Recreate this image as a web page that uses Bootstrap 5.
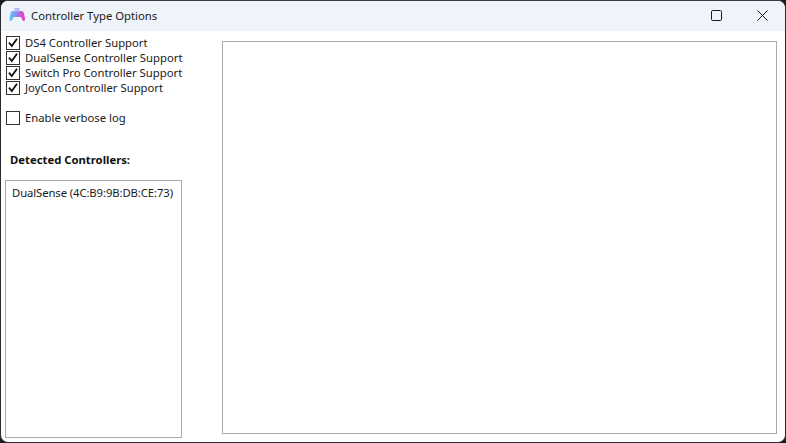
<!DOCTYPE html>
<html lang="en">
<head>
<meta charset="utf-8">
<title>Controller Type Options</title>
<link href="https://cdn.jsdelivr.net/npm/bootstrap@5.3.0/dist/css/bootstrap.min.css" rel="stylesheet">
<style>
html,body{height:100%;margin:0;background:#1c1c1c;overflow:hidden}
body{font-family:"Noto Sans","Open Sans",sans-serif;font-size:11.3px;line-height:15px;color:#1a1a1a}
.app-window{height:443px;width:786px;background:#fff;border:1px solid #2b2b2b;border-top-color:#3a3a3a;border-radius:8px;overflow:hidden}
.title-bar{height:30px;background:#eff3fa;padding:0 0 2px 7px}
.title-text{margin-left:5px;font-size:11.3px}
.win-btn{width:46px;height:28px}
.win-body{height:411px}
.side-col{width:221px;padding:4px 0 4px 4px}
.check-row{height:15px;padding-left:1px;margin:0}
.check-row .form-check-input{width:14px;height:14px;margin:0 5px 0 0;border:1px solid #333;border-radius:0;background-color:#fff;box-shadow:none;flex:none}
.check-row .form-check-input:checked{background-color:#fff;border-color:#333;background-size:12px 12px;background-image:url("data:image/svg+xml,%3csvg xmlns='http://www.w3.org/2000/svg' viewBox='0 0 12 12'%3e%3cpath fill='none' stroke='%23111' stroke-width='1.8' d='M2 5.600 4.800 9 10 1.800'/%3e%3c/svg%3e")}
.verbose-row{margin-top:15px}
.detect-head{font-weight:700;margin:27px 0 0 5px;height:28px;color:#111}
.list-frame{width:177px;height:258px;border:1px solid #ababab;padding:4px 6px;white-space:nowrap;letter-spacing:-.1px}
.log-frame{width:555px;height:393px;border:1px solid #ababab;margin-top:10px}
</style>
</head>
<body>
<div class="app-window d-flex flex-column">
  <div class="title-bar d-flex align-items-center">
    <svg width="18" height="16" viewBox="0 0 18 16">
      <defs><linearGradient id="padg" x1="0" x2="1" y1="0" y2="0"><stop offset="0" stop-color="#4fd0f7"/><stop offset=".5" stop-color="#9a7cf0"/><stop offset="1" stop-color="#f535c0"/></linearGradient></defs>
      <path fill="url(#padg)" d="M4.500 4h9c1.500 0 2.100 1 2.500 2.600l1 5.200c.2 1.300-.4 2.200-1.300 2.200-1 0-1.500-1-2-2.200l-.7-1.800H5.500l-.7 1.800c-.5 1.200-1 2.200-2 2.200-.9 0-1.500-.9-1.300-2.200l1-5.200C2.900 5 3 4 4.500 4z"/>
      <path fill="#a9b4ee" d="M6.500 1h5v4h-5z"/>
      <path fill="#e3e8f8" d="M7.500 2h1v1h-1zM9.500 2h1v1h-1z"/>
    </svg>
    <span class="title-text">Controller Type Options</span>
    <div class="ms-auto d-flex">
      <div class="win-btn"></div>
      <div class="win-btn d-flex align-items-center justify-content-center"><svg width="11" height="11" viewBox="0 0 11 11"><rect x=".5" y=".5" width="10" height="10" rx="1.200" fill="none" stroke="#1a1a1a"/></svg></div>
      <div class="win-btn d-flex align-items-center justify-content-center"><svg width="11" height="11" viewBox="0 0 11 11"><path d="M.5.500l10 10M10.500.500l-10 10" fill="none" stroke="#1a1a1a"/></svg></div>
    </div>
  </div>
  <div class="win-body d-flex">
    <div class="side-col d-flex flex-column">
      <label class="check-row d-flex align-items-center"><input class="form-check-input" type="checkbox" checked>DS4 Controller Support</label>
      <label class="check-row d-flex align-items-center"><input class="form-check-input" type="checkbox" checked>DualSense Controller Support</label>
      <label class="check-row d-flex align-items-center"><input class="form-check-input" type="checkbox" checked>Switch Pro Controller Support</label>
      <label class="check-row d-flex align-items-center"><input class="form-check-input" type="checkbox" checked>JoyCon Controller Support</label>
      <label class="check-row verbose-row d-flex align-items-center"><input class="form-check-input" type="checkbox">Enable verbose log</label>
      <div class="detect-head">Detected Controllers:</div>
      <div class="list-frame">DualSense (4C:B9:9B:DB:CE:73)</div>
    </div>
    <div class="log-frame"></div>
  </div>
</div>
<script src="https://cdn.jsdelivr.net/npm/bootstrap@5.3.0/dist/js/bootstrap.bundle.min.js"></script>
</body>
</html>
